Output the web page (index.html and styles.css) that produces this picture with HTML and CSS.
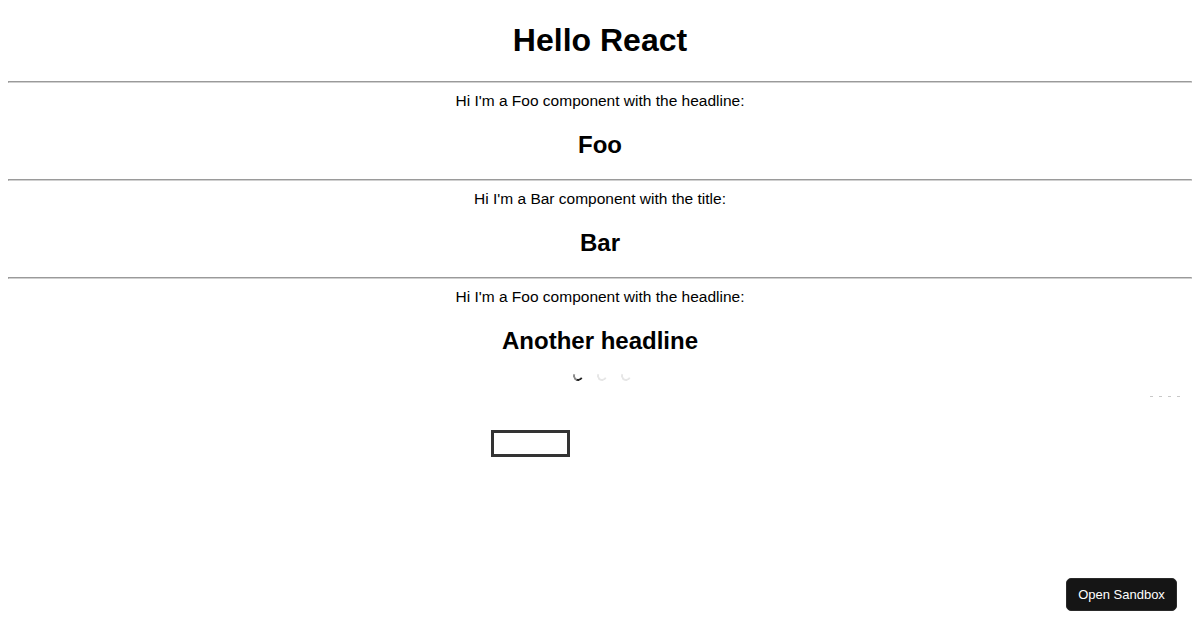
FILE: index.html
```html
<!DOCTYPE html>
<html lang="en">
<head>
    <meta charset="UTF-8">
    <title>Hello React</title>
    <link rel="stylesheet" href="styles.css">
</head>
<body>
    <div id="root">
        <h1>Hello React</h1>

        <hr>
        <div class="component">Hi I'm a Foo component with the headline:</div>
        <h2>Foo</h2>

        <hr>
        <div class="component">Hi I'm a Bar component with the title:</div>
        <h2>Bar</h2>

        <hr>
        <div class="component">Hi I'm a Foo component with the headline:</div>
        <h2>Another headline</h2>
    </div>

    <div class="loader">
        <span class="dot dark"></span>
        <span class="dot"></span>
        <span class="dot"></span>
    </div>
    <div class="specks"><i></i><i></i><i></i><i></i></div>

    <div class="box-row">
        <div class="empty-box"></div>
    </div>

    <button class="sandbox-btn">Open Sandbox</button>
</body>
</html>
```

FILE: styles.css
```css
body {
    font-family: "Liberation Sans", Arial, sans-serif;
    text-align: center;
    color: #000;
}
h1 {
    font-size: 32px;
    margin: 14px 0 22px;
}
hr {
    margin: 8px 0;
    border-style: solid;
    border-width: 1px;
    border-color: #9a9a9a #c8c8c8 #d0d0d0 #9a9a9a;
}
.component {
    font-size: 15.5px;
    line-height: 18px;
    padding-top: 1px;
}
h2 {
    font-size: 24px;
    margin: 21px 0 20px;
}
.loader {
    display: flex;
    justify-content: center;
    gap: 14px;
    height: 10px;
    margin-top: -4px;
    padding-left: 4px;
}
.dot {
    width: 10px;
    height: 10px;
    border-radius: 50%;
    border: 2px solid transparent;
    border-bottom-color: #e6e6e6;
    border-left-color: #e6e6e6;
    box-sizing: border-box;
    transform: rotate(-20deg);
}
.dot.dark {
    border-bottom-color: #222;
    border-left-color: #888;
}
.specks {
    display: flex;
    justify-content: flex-end;
    gap: 6px;
    padding-right: 12px;
    height: 8px;
    margin-top: 15px;
}
.specks i {
    width: 3px;
    height: 1px;
    background: #c8c8c8;
}
.box-row {
    display: flex;
    padding-left: 483px;
    margin-top: 26px;
}
.empty-box {
    width: 73px;
    height: 21px;
    border: 3px solid #333;
}
.sandbox-btn {
    position: fixed;
    right: 23px;
    bottom: 19px;
    width: 111px;
    height: 33px;
    background: #151515;
    color: #fff;
    border: 1px solid #2a2a2a;
    border-radius: 5px;
    font-family: "Liberation Sans", Arial, sans-serif;
    font-size: 13px;
    cursor: pointer;
}
```
